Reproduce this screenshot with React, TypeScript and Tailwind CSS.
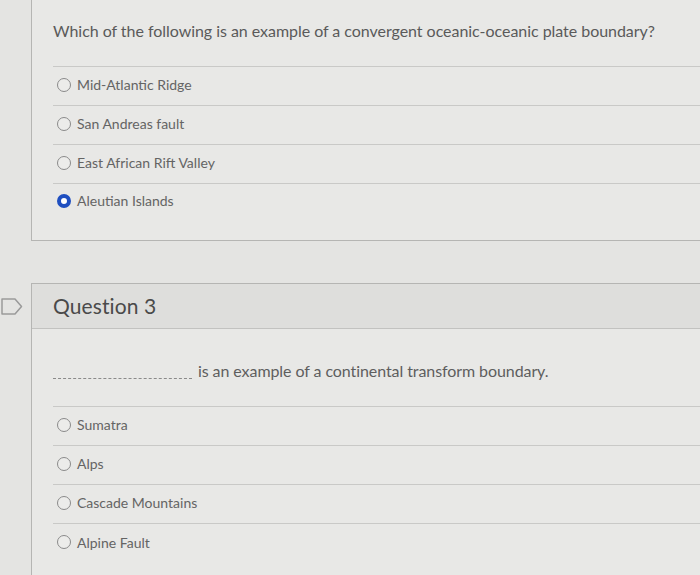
import React from "react";

const Radio = ({ checked }: { checked?: boolean }) =>
  checked ? (
    <span className="box-border inline-block w-[14px] h-[14px] rounded-full border-[4px] border-[#1f4fc0] bg-white shrink-0" />
  ) : (
    <span className="box-border inline-block w-[14px] h-[14px] rounded-full border-[1.5px] border-[#8a8a8a] bg-[#ececea] shrink-0" />
  );

const Option = ({ label, checked, last }: { label: string; checked?: boolean; last?: boolean }) => (
  <div className={"h-[39px] flex items-center pl-[4px] pb-[3px] gap-[6px] " + (last ? "" : "border-b border-[#c9c9c7]")}>
    <Radio checked={checked} />
    <span className="text-[14px] text-[#646464]">{label}</span>
  </div>
);

export default function App() {
  return (
    <div
      className="w-[700px] h-[575px] overflow-hidden bg-[#e4e4e2] flex flex-col"
      style={{ fontFamily: "Lato, 'Open Sans', sans-serif" }}
    >
      {/* Question 2 card (continued) */}
      <div className="ml-[31px] h-[241px] shrink-0 border-l border-b border-[#b5b5b3] bg-[#e8e8e6] pl-[21px] flex flex-col">
        <div className="h-[66px] flex items-center pb-[5px]">
          <span className="text-[16px] text-[#5a5a5a] tracking-[-0.04px]">
            Which of the following is an example of a convergent oceanic-oceanic plate boundary?
          </span>
        </div>
        <div className="border-t border-[#c9c9c7]">
          <Option label="Mid-Atlantic Ridge" />
          <Option label="San Andreas fault" />
          <Option label="East African Rift Valley" />
          <div className="h-[38px] flex items-center pl-[4px] pb-[5px] gap-[6px]">
            <Radio checked />
            <span className="text-[14px] text-[#646464]">Aleutian Islands</span>
          </div>
        </div>
      </div>

      {/* Question 3 */}
      <div className="mt-[42px] flex flex-1">
        <div className="w-[31px] shrink-0 pt-[15px] pl-[1px]">
          <svg width="22" height="17" viewBox="0 0 22 17">
            <path d="M1 1 H14 L20.5 8.5 L14 16 H1 Z" fill="none" stroke="#9a9a9a" strokeWidth="1.5" strokeLinejoin="round" />
          </svg>
        </div>
        <div className="flex-1 border-l border-t border-[#b5b5b3] bg-[#e8e8e6]">
          <div className="h-[45px] bg-[#dededc] border-b border-[#c2c2c0] flex items-center pl-[21px]">
            <span className="text-[21px] text-[#4a4a4a] tracking-[0.1px]">Question 3</span>
          </div>
          <div className="pl-[21px]">
            <div className="h-[78px] flex items-center border-b border-[#c9c9c7] pt-[7px]">
              <span className="inline-block w-[139px] h-[10px] border-b border-dashed border-[#8a8a8a] mr-[6px] mt-[6px]" />
              <span className="text-[16px] text-[#5e5e5e] tracking-[-0.08px]">
                is an example of a continental transform boundary.
              </span>
            </div>
            <Option label="Sumatra" />
            <Option label="Alps" />
            <Option label="Cascade Mountains" />
            <Option label="Alpine Fault" last />
          </div>
        </div>
      </div>
    </div>
  );
}
